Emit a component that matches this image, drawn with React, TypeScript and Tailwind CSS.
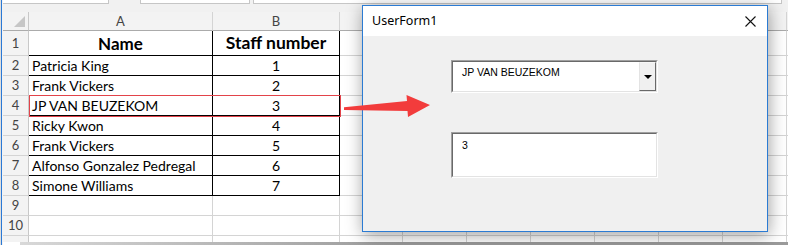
import React from "react";

const rows: [string, string][] = [
  ["Patricia King", "1"],
  ["Frank Vickers", "2"],
  ["JP VAN BEUZEKOM", "3"],
  ["Ricky Kwon", "4"],
  ["Frank Vickers", "5"],
  ["Alfonso Gonzalez Pedregal", "6"],
  ["Simone Williams", "7"],
];

// columns C..J sit under the form, so their letters never show
const cols = ["A", "B", "", "", "", "", "", "", "", ""];

function HeaderRow() {
  return (
    <>
      <div className="relative bg-[#f3f3f3] border-r border-b border-r-[#c8c8c8] border-b-[#ababab]">
        <div className="absolute right-[3px] bottom-[3px] w-0 h-0 border-l-[11px] border-l-transparent border-b-[11px] border-b-[#c6c6c6]" />
      </div>
      {cols.map((c, i) => (
        <div
          key={i}
          className="bg-[#f3f3f3] border-r border-b border-r-[#d4d4d4] border-b-[#ababab] flex items-center justify-center pt-[2px] text-[13px] text-[#444]"
        >
          {c}
        </div>
      ))}
    </>
  );
}

function RowHead({ n }: { n?: number }) {
  return (
    <div className="bg-[#f3f3f3] border-r border-b border-r-[#c8c8c8] border-b-[#d4d4d4] flex items-center justify-center pt-[1px] text-[13px] text-[#444]">
      {n}
    </div>
  );
}

function Empty({ n }: { n: number }) {
  return (
    <>
      {Array.from({ length: n }).map((_, i) => (
        <div key={i} className="border-r border-b border-[#d4d4d4]" />
      ))}
    </>
  );
}

function Sheet() {
  return (
    <div className="grid grid-cols-[26px_184px_127px_63px_64px_64px_64px_64px_64px_64px_64px] grid-rows-[19px_25px_repeat(10,20px)] h-[230px] overflow-hidden">
      <HeaderRow />
      <RowHead n={1} />
      <div className="border-r border-b border-black flex items-center justify-center pt-[1px] font-bold text-[17px] text-black">
        Name
      </div>
      <div className="border-r border-b border-black flex items-center justify-center pt-[1px] font-bold text-[17.5px] text-black">
        Staff number
      </div>
      <Empty n={8} />
      {rows.map(([name, num], i) => (
        <React.Fragment key={i}>
          <RowHead n={i + 2} />
          <div className="border-r border-b border-black flex items-end pl-[3px] text-[14px] leading-[18px] text-black">
            {name}
          </div>
          <div className="border-r border-b border-black flex items-end justify-center text-[14px] leading-[18px] text-black">
            {num}
          </div>
          <Empty n={8} />
        </React.Fragment>
      ))}
      <RowHead n={9} />
      <Empty n={10} />
      <RowHead n={10} />
      <Empty n={10} />
      <RowHead />
      <Empty n={10} />
    </div>
  );
}

function Sunken({ className, children }: { className: string; children: React.ReactNode }) {
  return (
    <div className={`border border-t-[#a0a0a0] border-l-[#a0a0a0] border-b-white border-r-white ${className}`}>
      <div className="h-full border border-t-[#696969] border-l-[#696969] border-b-[#e3e3e3] border-r-[#e3e3e3] bg-white flex">
        {children}
      </div>
    </div>
  );
}

function UserForm() {
  return (
    <div className="absolute left-[362px] top-[5px] w-[406px] h-[227px] border border-[#2b7bd3] flex flex-col shadow-[1px_3px_16px_rgba(0,0,0,0.38)]">
      <div className="h-[30px] bg-white flex items-center justify-between pl-[9px] pr-[10px] font-['Noto_Sans',sans-serif] text-[12.5px] text-black">
        <span>UserForm1</span>
        <svg width="11" height="11" viewBox="0 0 11 11" className="mr-[1px]">
          <path d="M0.5 0.5L10.5 10.5M10.5 0.5L0.5 10.5" stroke="#111" strokeWidth="1.1" />
        </svg>
      </div>
      <div className="flex-1 bg-[#f0f0f0] flex flex-col pl-[88px] pt-[24px] gap-[39px] font-['Liberation_Sans',sans-serif] text-[10.5px] text-black">
        <Sunken className="w-[207px] h-[33px]">
          <div className="flex-1 pl-[9px] pt-[4px] leading-[12px]">JP VAN BEUZEKOM</div>
          <div className="w-[17px] h-full bg-[#f0f0f0] border border-t-[#f7f7f7] border-l-[#e3e3e3] border-b-[#696969] border-r-[#696969] flex items-center justify-center">
            <div className="w-0 h-0 border-l-[4px] border-r-[4px] border-t-[4px] border-l-transparent border-r-transparent border-t-black" />
          </div>
        </Sunken>
        <Sunken className="w-[207px] h-[46px]">
          <div className="flex-1 pl-[9px] pt-[5px] leading-[12px]">3</div>
        </Sunken>
      </div>
    </div>
  );
}

export default function App() {
  return (
    <div className="relative w-[788px] h-[245px] overflow-hidden bg-white flex font-['Lato',sans-serif]">
      <div className="w-[1px] bg-[#dedede]" />
      <div className="w-[1px] bg-[#2b79d5]" />
      <div className="w-[1px] bg-[#f3f3f3]" />
      <div className="flex-1 flex flex-col min-w-0">
        {/* toolbar strip */}
        <div className="h-[12px] bg-[#f1f1f1] flex items-start">
          <div className="w-[106px] h-[4px] bg-white border-b border-r border-[#c6c6c6]" />
          <div className="ml-[31px] w-[110px] h-[4px] bg-white border-b border-x border-[#c6c6c6]" />
          <div className="ml-[3px] w-[529px] h-[4px] bg-white border-b border-x border-[#c6c6c6]" />
        </div>
        <Sheet />
        <div className="h-[3px] ml-[17px] bg-gradient-to-r from-[#d8d8d8] via-[#9a9a9a] to-[#9a9a9a]" />
      </div>

      {/* selection outline on row 4 */}
      <div className="absolute left-[29px] top-[95px] w-[312px] h-[22px] border border-[#e2434a]" />

      <UserForm />

      <svg className="absolute left-[340px] top-[90px]" width="95" height="30" viewBox="0 0 95 30">
        <polygon points="4,17.2 67,11 66.5,5 90,15 68,27 67.5,21 4,20" fill="#f23c3c" />
      </svg>
    </div>
  );
}
